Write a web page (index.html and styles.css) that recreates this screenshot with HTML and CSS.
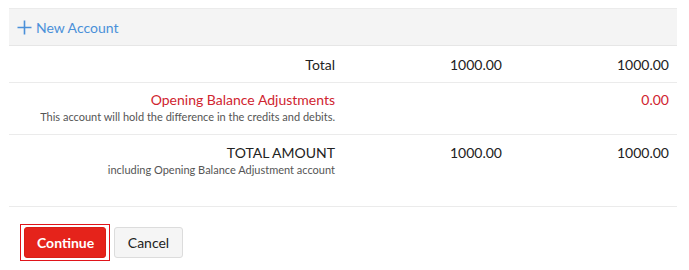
FILE: index.html
```html
<!DOCTYPE html>
<html>
<head>
<meta charset="utf-8">
<link rel="stylesheet" href="styles.css">
</head>
<body>
<div class="wrap">
  <div class="addbar">
    <a class="add-link" href="#">
      <svg class="plus" width="15" height="15" viewBox="0 0 15 15"><path d="M7.5 0.5v14M0.5 7.5h14" stroke="#4a90d9" stroke-width="1.6" fill="none"/></svg>
      <span>New Account</span>
    </a>
  </div>
  <div class="row row-total">
    <div class="cell label">Total</div>
    <div class="cell amt">1000.00</div>
    <div class="cell amt">1000.00</div>
  </div>
  <div class="row row-adj">
    <div class="cell label">
      <div class="title red">Opening Balance Adjustments</div>
      <div class="sub">This account will hold the difference in the credits and debits.</div>
    </div>
    <div class="cell amt"></div>
    <div class="cell amt red">0.00</div>
  </div>
  <div class="row row-grand">
    <div class="cell label">
      <div class="title">TOTAL AMOUNT</div>
      <div class="sub">including Opening Balance Adjustment account</div>
    </div>
    <div class="cell amt">1000.00</div>
    <div class="cell amt">1000.00</div>
  </div>
  <div class="actions">
    <span class="focus-ring"><button class="btn btn-primary">Continue</button></span>
    <button class="btn btn-default">Cancel</button>
  </div>
</div>
</body>
</html>
```

FILE: styles.css
```css
html, body {
  margin: 0;
  padding: 0;
  background: #ffffff;
}
body {
  font-family: "Lato", "Open Sans", sans-serif;
  color: #222222;
  font-size: 14px;
}
.wrap {
  margin-left: 9px;
  width: 668px;
  padding-top: 8px;
}
.addbar {
  height: 36px;
  background: #f4f4f4;
  border-top: 1px solid #ebebeb;
  border-bottom: 1px solid #e6e6e6;
  display: flex;
  align-items: center;
  padding-left: 8px;
}
.add-link {
  display: flex;
  align-items: center;
  gap: 4px;
  color: #4a90d9;
  text-decoration: none;
  font-size: 14px;
}
.plus {
  display: block;
}
.row {
  display: grid;
  grid-template-columns: 336px 167px 167px;
  border-bottom: 1px solid #ebebeb;
}
.cell {
  text-align: right;
  padding-right: 10px;
}
.row-total {
  height: 36px;
  align-items: center;
}
.row-adj {
  height: 51px;
  align-items: start;
}
.row-adj .cell {
  padding-top: 8px;
}
.row-grand {
  height: 71px;
  align-items: start;
}
.row-grand .cell {
  padding-top: 9px;
}
.title {
  font-size: 14px;
  line-height: 18px;
}
.sub {
  font-size: 11px;
  color: #555555;
  line-height: 16px;
}
.red {
  color: #d0242f;
}
.actions {
  display: flex;
  align-items: center;
  gap: 4px;
  padding-top: 17px;
  padding-left: 11px;
}
.focus-ring {
  display: inline-flex;
  border: 1px solid #e0141a;
  padding: 2px 3px;
}
.btn {
  font-family: "Lato", "Open Sans", sans-serif;
  font-size: 14px;
  height: 31px;
  border-radius: 3px;
  padding: 0 12px;
  cursor: pointer;
}
.btn-primary {
  background: #e5231b;
  color: #ffffff;
  font-weight: bold;
  border: 1px solid #d81f17;
  width: 82px;
}
.btn-default {
  background: #f5f5f5;
  color: #222222;
  border: 1px solid #dcdcdc;
  width: 69px;
}
```
